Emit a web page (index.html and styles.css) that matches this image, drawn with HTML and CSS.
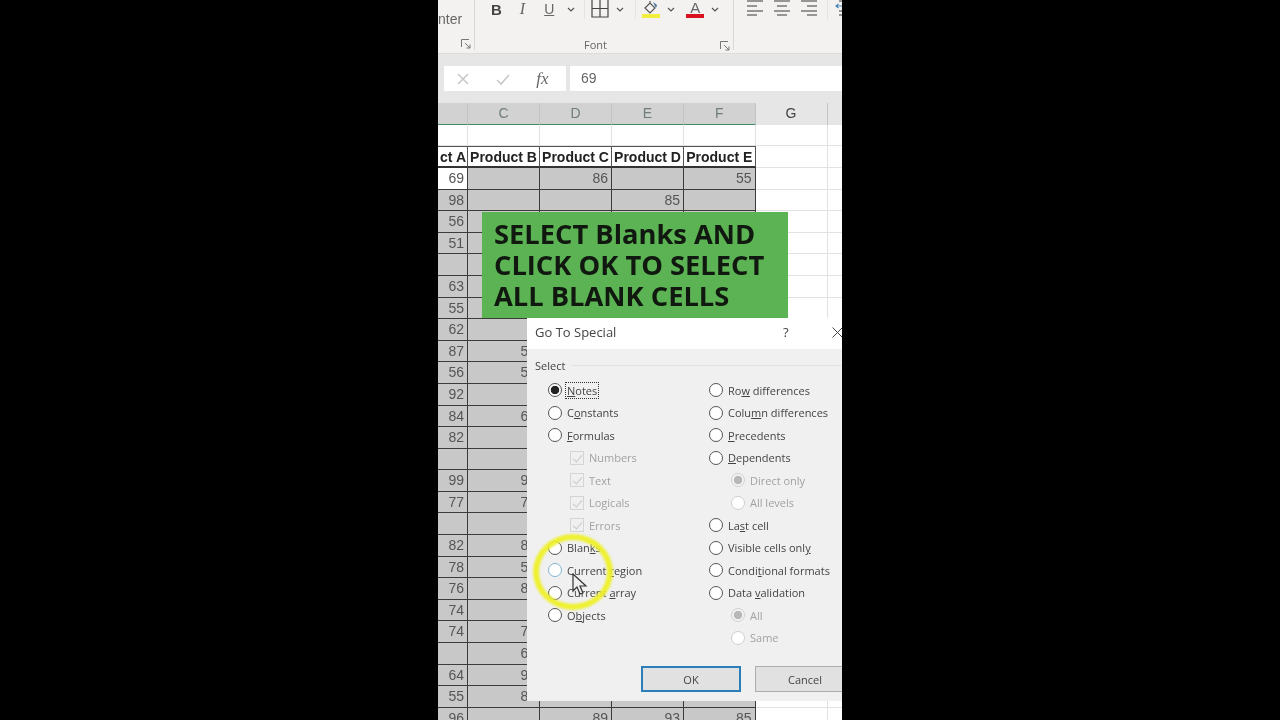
FILE: index.html
```html
<!DOCTYPE html>
<html lang="en">
<head>
    <meta charset="UTF-8">
    <title>Go To Special</title>
    <link rel="stylesheet" href="styles.css">
</head>
<body>
    <div class="phone">
        <div class="ribbon">
            <div class="group group-left">
                <span class="cut-text">nter</span>
                <svg class="launcher" width="10" height="10" viewBox="0 0 10 10"><path d="M0.5 8V0.5H8M4 4l5 5M9 5.5V9H5.5" fill="none" stroke="#777" stroke-width="1"/></svg>
            </div>
            <div class="group group-font">
                <div class="tools">
                    <b class="tool-b">B</b>
                    <i class="tool-i">I</i>
                    <span class="tool-u">U</span>
                    <svg class="chev chev-u" width="8" height="5" viewBox="0 0 8 5"><path d="M1 1l3 3 3-3" fill="none" stroke="#555" stroke-width="1.2"/></svg>
                    <span class="tool-sep sep-a"></span>
                    <svg class="tool-borders" width="18" height="18" viewBox="0 0 18 18"><path d="M1 0v17h16V0M1 8.500h16M9 0v17" fill="none" stroke="#444" stroke-width="1.200"/></svg>
                    <svg class="chev chev-b" width="8" height="5" viewBox="0 0 8 5"><path d="M1 1l3 3 3-3" fill="none" stroke="#555" stroke-width="1.2"/></svg>
                    <span class="tool-sep sep-b"></span>
                    <div class="tool-fill">
                        <svg width="16" height="13" viewBox="0 0 16 13"><path d="M2 7l5-5 5 5-5 5zM7 2V0" fill="none" stroke="#555" stroke-width="1.200"/><path d="M10 1l4 3-1 3z" fill="#3d6f9e"/></svg>
                        <span class="swatch swatch-yellow"></span>
                    </div>
                    <svg class="chev chev-f" width="8" height="5" viewBox="0 0 8 5"><path d="M1 1l3 3 3-3" fill="none" stroke="#555" stroke-width="1.2"/></svg>
                    <div class="tool-color">
                        <span class="tool-a">A</span>
                        <span class="swatch swatch-red"></span>
                    </div>
                    <svg class="chev chev-a" width="8" height="5" viewBox="0 0 8 5"><path d="M1 1l3 3 3-3" fill="none" stroke="#555" stroke-width="1.2"/></svg>
                </div>
                <div class="group-foot">
                    <span class="group-name">Font</span>
                    <svg class="launcher" width="10" height="10" viewBox="0 0 10 10"><path d="M0.5 8V0.5H8M4 4l5 5M9 5.5V9H5.5" fill="none" stroke="#777" stroke-width="1"/></svg>
                </div>
            </div>
            <div class="group group-align">
                <svg width="17" height="16" viewBox="0 0 17 16"><path d="M1 1h16M1 6h10M1 11h16M1 15h10" stroke="#777" stroke-width="1.300"/></svg>
                <svg width="17" height="16" viewBox="0 0 17 16"><path d="M1 1h16M4 6h10M1 11h16M4 15h10" stroke="#777" stroke-width="1.300"/></svg>
                <svg width="17" height="16" viewBox="0 0 17 16"><path d="M1 1h16M7 6h10M1 11h16M7 15h10" stroke="#777" stroke-width="1.300"/></svg>
                <span class="tool-sep"></span>
                <svg width="10" height="16" viewBox="0 0 10 16"><path d="M4 1h6M4 11h6M4 15h6" stroke="#777" stroke-width="1.300"/><path d="M1 6h9M3.500 4L1 6l2.500 2" fill="none" stroke="#4a86b8" stroke-width="1.200"/></svg>
            </div>
        </div>

        <div class="formula-band">
            <div class="fx-buttons">
                <svg width="14" height="14" viewBox="0 0 14 14"><path d="M2 2l10 10M12 2L2 12" stroke="#c8c8c8" stroke-width="1.600"/></svg>
                <svg width="16" height="14" viewBox="0 0 16 14"><path d="M2 8l4 4 8-9" fill="none" stroke="#c8c8c8" stroke-width="1.600"/></svg>
                <i class="fx">fx</i>
            </div>
            <div class="fx-input">69</div>
        </div>

        <div class="col-headers">
            <span class="col-cut"></span>
            <span class="col on">C</span>
            <span class="col on">D</span>
            <span class="col on">E</span>
            <span class="col on">F</span>
            <span class="col">G</span>
            <span class="col"></span>
        </div>

        <div class="sheet">
            <div class="row blank"><span></span><span></span><span></span><span></span><span></span><span></span><span></span></div>
            <div class="row head"><span>ct A</span><span>Product B</span><span>Product C</span><span>Product D</span><span>Product E</span><span></span><span></span></div>
            <div class="row first"><span>69</span><span></span><span>86</span><span></span><span>55</span><span></span><span></span></div>
            <div class="row"><span>98</span><span></span><span></span><span>85</span><span></span><span></span><span></span></div>
            <div class="row"><span>56</span><span></span><span></span><span></span><span></span><span></span><span></span></div>
            <div class="row"><span>51</span><span></span><span></span><span></span><span></span><span></span><span></span></div>
            <div class="row"><span></span><span></span><span></span><span></span><span></span><span></span><span></span></div>
            <div class="row"><span>63</span><span></span><span></span><span></span><span></span><span></span><span></span></div>
            <div class="row"><span>55</span><span></span><span></span><span></span><span></span><span></span><span></span></div>
            <div class="row"><span>62</span><span></span><span></span><span></span><span></span><span></span><span></span></div>
            <div class="row"><span>87</span><span>58</span><span></span><span></span><span></span><span></span><span></span></div>
            <div class="row"><span>56</span><span>52</span><span></span><span></span><span></span><span></span><span></span></div>
            <div class="row"><span>92</span><span></span><span></span><span></span><span></span><span></span><span></span></div>
            <div class="row"><span>84</span><span>63</span><span></span><span></span><span></span><span></span><span></span></div>
            <div class="row"><span>82</span><span></span><span></span><span></span><span></span><span></span><span></span></div>
            <div class="row"><span></span><span></span><span></span><span></span><span></span><span></span><span></span></div>
            <div class="row"><span>99</span><span>91</span><span></span><span></span><span></span><span></span><span></span></div>
            <div class="row"><span>77</span><span>74</span><span></span><span></span><span></span><span></span><span></span></div>
            <div class="row"><span></span><span></span><span></span><span></span><span></span><span></span><span></span></div>
            <div class="row"><span>82</span><span>86</span><span></span><span></span><span></span><span></span><span></span></div>
            <div class="row"><span>78</span><span>57</span><span></span><span></span><span></span><span></span><span></span></div>
            <div class="row"><span>76</span><span>83</span><span></span><span></span><span></span><span></span><span></span></div>
            <div class="row"><span>74</span><span></span><span></span><span></span><span></span><span></span><span></span></div>
            <div class="row"><span>74</span><span>72</span><span></span><span></span><span></span><span></span><span></span></div>
            <div class="row"><span></span><span>65</span><span></span><span></span><span></span><span></span><span></span></div>
            <div class="row"><span>64</span><span>94</span><span></span><span></span><span></span><span></span><span></span></div>
            <div class="row"><span>55</span><span>81</span><span></span><span></span><span></span><span></span><span></span></div>
            <div class="row"><span>96</span><span></span><span>89</span><span>93</span><span>85</span><span></span><span></span></div>
        </div>

        <div class="caption">SELECT Blanks AND<br>CLICK OK TO SELECT<br>ALL BLANK CELLS</div>

        <div class="dialog">
            <div class="dialog-title">
                <span class="title-text">Go To Special</span>
                <span class="help">?</span>
                <svg class="close" width="11" height="11" viewBox="0 0 11 11"><path d="M0.500 0.500l10 10M10.500 0.500l-10 10" stroke="#444" stroke-width="1"/></svg>
            </div>
            <div class="dialog-body">
                <div class="select-label"><span>Select</span></div>
                <div class="options">
                    <div class="option-col">
                        <label class="opt"><span class="radio checked"></span><span class="focus"><u>N</u>otes</span></label>
                        <label class="opt"><span class="radio"></span><span>C<u>o</u>nstants</span></label>
                        <label class="opt"><span class="radio"></span><span><u>F</u>ormulas</span></label>
                        <label class="opt sub off"><span class="check"></span><span>Numbers</span></label>
                        <label class="opt sub off"><span class="check"></span><span>Text</span></label>
                        <label class="opt sub off"><span class="check"></span><span>Logicals</span></label>
                        <label class="opt sub off"><span class="check"></span><span>Errors</span></label>
                        <label class="opt"><span class="radio"></span><span>Blan<u>k</u>s</span></label>
                        <label class="opt"><span class="radio hover"></span><span>Current <u>r</u>egion</span></label>
                        <label class="opt"><span class="radio"></span><span>Current <u>a</u>rray</span></label>
                        <label class="opt"><span class="radio"></span><span>O<u>b</u>jects</span></label>
                    </div>
                    <div class="option-col">
                        <label class="opt"><span class="radio"></span><span>Ro<u>w</u> differences</span></label>
                        <label class="opt"><span class="radio"></span><span>Colu<u>m</u>n differences</span></label>
                        <label class="opt"><span class="radio"></span><span><u>P</u>recedents</span></label>
                        <label class="opt"><span class="radio"></span><span><u>D</u>ependents</span></label>
                        <label class="opt sub off"><span class="radio checked"></span><span>Direct only</span></label>
                        <label class="opt sub off"><span class="radio"></span><span>All levels</span></label>
                        <label class="opt"><span class="radio"></span><span>La<u>s</u>t cell</span></label>
                        <label class="opt"><span class="radio"></span><span>Visible cells onl<u>y</u></span></label>
                        <label class="opt"><span class="radio"></span><span>Condi<u>t</u>ional formats</span></label>
                        <label class="opt"><span class="radio"></span><span>Data <u>v</u>alidation</span></label>
                        <label class="opt sub off"><span class="radio checked"></span><span>All</span></label>
                        <label class="opt sub off"><span class="radio"></span><span>Same</span></label>
                    </div>
                </div>
                <div class="dialog-buttons">
                    <button class="btn btn-ok">OK</button>
                    <button class="btn">Cancel</button>
                </div>
            </div>
        </div>

        <div class="spotlight"></div>
        <svg class="cursor" width="16" height="24" viewBox="0 0 16 24"><path d="M1 1v17l4-4 3 7 3-1-3-7h6z" fill="#eee" stroke="#333" stroke-width="1.200"/></svg>
    </div>
</body>
</html>
```

FILE: styles.css
```css
* {
    margin: 0;
    padding: 0;
    box-sizing: border-box;
}

body {
    display: flex;
    justify-content: center;
    height: 720px;
    overflow: hidden;
    background: #000;
    font-family: "Liberation Sans", Arial, sans-serif;
}

.phone {
    position: relative;
    width: 404px;
    height: 720px;
    overflow: hidden;
    background: #fff;
    filter: blur(0.35px);
}

/* ribbon */
.ribbon {
    display: flex;
    height: 54px;
    background: #f3f2f1;
    border-bottom: 1px solid #dcdcdc;
}

.group {
    flex: none;
    height: 50px;
    border-right: 1px solid #d6d6d6;
}

.group-left {
    display: flex;
    flex-direction: column;
    justify-content: space-between;
    width: 37px;
    padding-top: 11px;
    padding-bottom: 1px;
}

.cut-text {
    color: #666;
    font-size: 14px;
}

.group-left .launcher {
    align-self: flex-end;
    margin-right: 3px;
}

.group-font {
    position: relative;
    width: 259px;
}

.tools {
    display: flex;
    align-items: center;
    height: 18px;
    color: #444;
}

.tool-b {
    margin-left: 16px;
    font-size: 15px;
}

.tool-i {
    margin-left: 18px;
    font-family: "Liberation Serif", serif;
    font-size: 16px;
    color: #666;
}

.tool-u {
    margin-left: 19px;
    font-size: 14px;
    color: #666;
    text-decoration: underline;
}

.chev {
    flex: none;
}

.chev-u {
    margin-left: 13px;
}

.tool-sep {
    width: 1px;
    height: 20px;
    background: #e4e4e4;
}

.sep-a {
    margin-left: 9px;
}

.tool-borders {
    margin-left: 6px;
}

.chev-b {
    margin-left: 7px;
}

.sep-b {
    margin-left: 11px;
}

.tool-fill {
    display: flex;
    flex-direction: column;
    align-items: center;
    width: 20px;
    margin-left: 5px;
}

.swatch {
    display: block;
    width: 18px;
    height: 4px;
}

.swatch-yellow {
    background: #f2ee3c;
}

.swatch-red {
    background: #d8121f;
}

.chev-f {
    margin-left: 6px;
}

.tool-color {
    display: flex;
    flex-direction: column;
    align-items: center;
    width: 18px;
    margin-left: 11px;
}

.tool-a {
    height: 14px;
    font-size: 15px;
    line-height: 15px;
    color: #666;
}

.chev-a {
    margin-left: 7px;
}

.group-foot {
    position: relative;
    display: flex;
    justify-content: center;
    margin-top: 19px;
    padding-right: 17px;
}

.group-name {
    font-family: "Open Sans", sans-serif;
    font-size: 11px;
    color: #666;
}

.group-foot .launcher {
    position: absolute;
    right: 3px;
    top: 4px;
}

.group-align {
    display: flex;
    align-items: flex-start;
    gap: 10px;
    border: none;
    padding-left: 12px;
}

.group-align .tool-sep {
    margin-right: -3px;
}

/* formula bar */
.formula-band {
    display: flex;
    gap: 4px;
    height: 49px;
    padding: 12px 0 0 6px;
    background: #e6e6e6;
}

.fx-buttons {
    display: flex;
    align-items: center;
    justify-content: space-around;
    width: 122px;
    height: 25px;
    padding-right: 5px;
    background: #fff;
}

.fx {
    font-family: "Liberation Serif", serif;
    font-size: 17px;
    color: #666;
}

.fx-input {
    flex: 1;
    height: 25px;
    padding-left: 11px;
    background: #fff;
    color: #666;
    font-size: 14px;
    line-height: 25px;
}

/* sheet */
.col-headers,
.row {
    display: grid;
    grid-template-columns: 30px repeat(3, 72px) 71.500px 72px 15px;
}

.col-headers {
    height: 21.800px;
    background: #e6e6e6;
}

.col {
    border-right: 1px solid #c4c4c4;
    font-size: 14px;
    line-height: 21px;
    text-align: center;
    color: #444;
}

.col-cut {
    background: #d2d2d2;
    border-right: 1px solid #c4c4c4;
    border-bottom: 2px solid #3f8a63;
}

.col.on {
    background: #d2d2d2;
    border-bottom: 2px solid #3f8a63;
    color: #6f7f77;
}

.row {
    height: 21.600px;
    font-size: 14px;
    line-height: 21px;
    color: #555;
    text-align: right;
}

.row span {
    padding-right: 3px;
    background: #c8c8c8;
    border-right: 1px solid #3c3c3c;
    border-bottom: 1px solid #3c3c3c;
    white-space: nowrap;
    overflow: hidden;
}

.row span:nth-child(n+6) {
    background: #fff;
    border-right: 1px solid #e2e2e2;
    border-bottom: 1px solid #e2e2e2;
}

.row.blank span {
    background: #fff;
    border-color: #e2e2e2;
}

.row.head {
    color: #222;
    font-weight: bold;
}

.row.head span:nth-child(-n+5) {
    background: #fff;
    border-top: 1px solid #555;
    border-right: 1px solid #555;
    border-bottom: 2px solid #333;
    text-align: center;
    padding: 0;
    line-height: 20px;
}

.row.head span:first-child {
    text-align: right;
    padding-right: 1px;
}

.row.first span:first-child {
    background: #fff;
}

.row span:nth-child(5) {
    box-shadow: 1px 0 0 #5f9c7c;
}

/* caption */
.caption {
    position: absolute;
    left: 44px;
    top: 212px;
    width: 306px;
    height: 106px;
    padding: 6px 0 0 12px;
    background: #5cb354;
    color: #10180f;
    font-family: "Open Sans", sans-serif;
    font-size: 27.300px;
    font-weight: 700;
    line-height: 31px;
    white-space: nowrap;
}

/* dialog */
.dialog {
    position: absolute;
    left: 89px;
    top: 318px;
    width: 340px;
    height: 383px;
    font-family: "Open Sans", sans-serif;
    font-size: 11px;
    color: #444;
}

.dialog-title {
    position: relative;
    height: 31px;
    padding-left: 8px;
    background: #fff;
    font-size: 13px;
    line-height: 29px;
}

.help {
    position: absolute;
    left: 256px;
    top: 0;
}

.close {
    position: absolute;
    left: 305px;
    top: 9px;
}

.dialog-body {
    height: 352px;
    padding-top: 8px;
    background: #f0f0f0;
}

.select-label {
    display: flex;
    align-items: center;
    gap: 6px;
    height: 16px;
    padding-left: 8px;
}

.select-label::after {
    content: "";
    flex: 1;
    height: 1px;
    background: #e2e2e2;
}

.options {
    display: grid;
    grid-template-columns: 161px 1fr;
    padding: 6px 0 0 21px;
}

.opt {
    display: flex;
    align-items: center;
    gap: 5px;
    height: 22.500px;
    white-space: nowrap;
}

.opt.sub {
    padding-left: 22px;
}

.opt.off {
    color: #a2a2a2;
}

.radio {
    flex: none;
    width: 14px;
    height: 14px;
    border: 1.500px solid #555;
    border-radius: 50%;
    background: #fff;
}

.radio.checked {
    background: radial-gradient(circle, #222 0 3.800px, #fff 4.600px);
}

.radio.hover {
    border-color: #7fb2cf;
}

.off .radio {
    border-color: #d0d0d0;
}

.off .radio.checked {
    background: radial-gradient(circle, #b8b8b8 0 3.800px, #f4f4f4 4.600px);
}

.check {
    position: relative;
    flex: none;
    width: 14px;
    height: 14px;
    border: 1px solid #d4d4d4;
}

.check::after {
    content: "";
    position: absolute;
    left: 4px;
    top: 1px;
    width: 4px;
    height: 8px;
    border-right: 1px solid #c8c8c8;
    border-bottom: 1px solid #c8c8c8;
    transform: rotate(40deg);
}

.focus {
    padding: 0 1px;
    margin-left: -1px;
    outline: 1px dotted #333;
}

.dialog-buttons {
    display: flex;
    gap: 14px;
    margin-top: 17px;
    padding-left: 114px;
}

.btn {
    width: 100px;
    height: 26px;
    border: 1px solid #adadad;
    background: #e1e1e1;
    color: #444;
    font-family: "Open Sans", sans-serif;
    font-size: 11px;
}

.btn-ok {
    border: 2px solid #2b7fb8;
}

/* video overlays */
.spotlight {
    position: absolute;
    left: 95px;
    top: 534px;
    width: 80px;
    height: 76px;
    border: 6.500px solid rgba(238, 240, 40, 0.95);
    border-radius: 50%;
    filter: blur(1px);
}

.cursor {
    position: absolute;
    left: 134px;
    top: 573px;
}
```
